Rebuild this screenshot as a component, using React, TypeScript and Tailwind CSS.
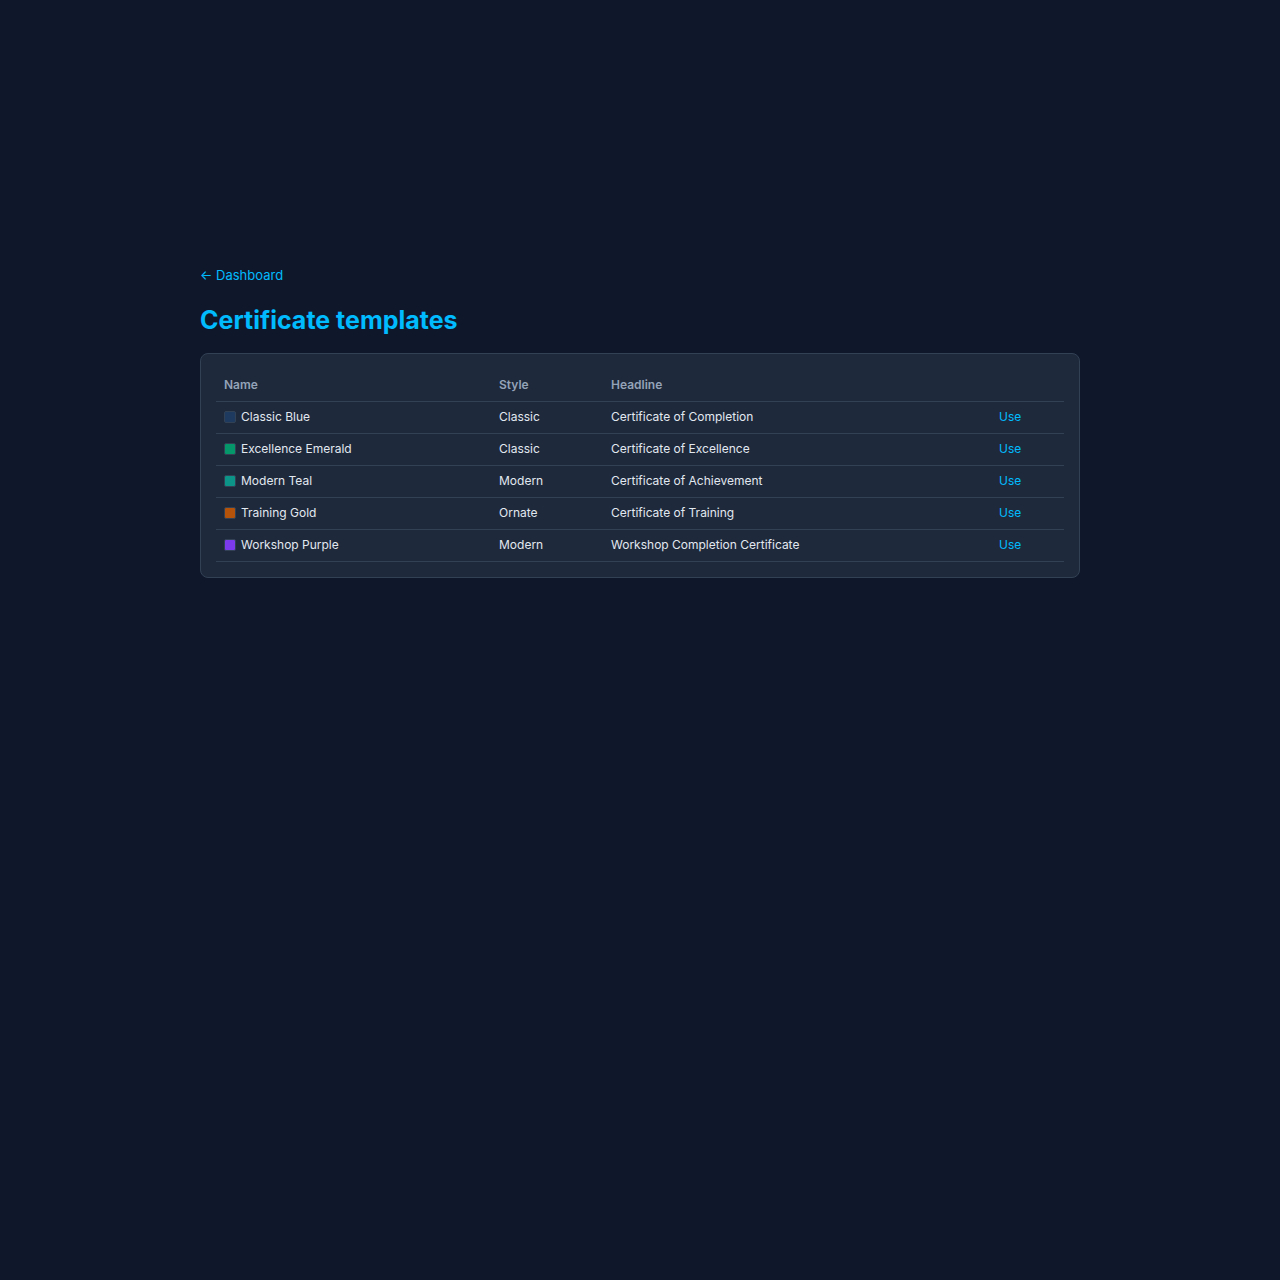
export default function App() {
  const rows = [
    ["Classic Blue", "bg-[#1e3a5f]", "Classic", "Certificate of Completion"],
    ["Excellence Emerald", "bg-[#059669]", "Classic", "Certificate of Excellence"],
    ["Modern Teal", "bg-[#0d9488]", "Modern", "Certificate of Achievement"],
    ["Training Gold", "bg-[#b45309]", "Ornate", "Certificate of Training"],
    ["Workshop Purple", "bg-[#7c3aed]", "Modern", "Workshop Completion Certificate"],
  ];
  return (
    <div className="min-h-[1280px] bg-[#0f172a] pt-[266px] px-[200px]" style={{ fontFamily: "Inter, 'Noto Sans', sans-serif" }}>
      <div className="text-[13px] text-sky-400 leading-[18px]">← Dashboard</div>
      <h1 className="mt-[20px] text-[25px] font-bold text-sky-400 leading-[32px]">Certificate templates</h1>
      <div className="mt-[17px] rounded-lg border border-[#334155] bg-[#1e293b] p-[15px]">
        <table className="w-full text-[12px] border-collapse">
          <thead>
            <tr className="border-b border-[#334155] text-[#94a3b8] text-left">
              <th className="font-semibold px-2 h-[32px] w-[275px]">Name</th>
              <th className="font-semibold px-2 w-[112px]">Style</th>
              <th className="font-semibold px-2">Headline</th>
              <th className="w-[73px]"></th>
            </tr>
          </thead>
          <tbody>
            {rows.map((r) => (
              <tr key={r[0]} className="border-b border-[#334155] text-[#e2e8f0]">
                <td className="px-2 h-[32px]">
                  <div className="flex items-center gap-[5px]">
                    <span className={`w-[12px] h-[12px] rounded-[2px] border border-[#334155] ${r[1]}`}></span>
                    {r[0]}
                  </div>
                </td>
                <td className="px-2">{r[2]}</td>
                <td className="px-2">{r[3]}</td>
                <td className="px-2 text-sky-400">Use</td>
              </tr>
            ))}
          </tbody>
        </table>
      </div>
    </div>
  );
}
